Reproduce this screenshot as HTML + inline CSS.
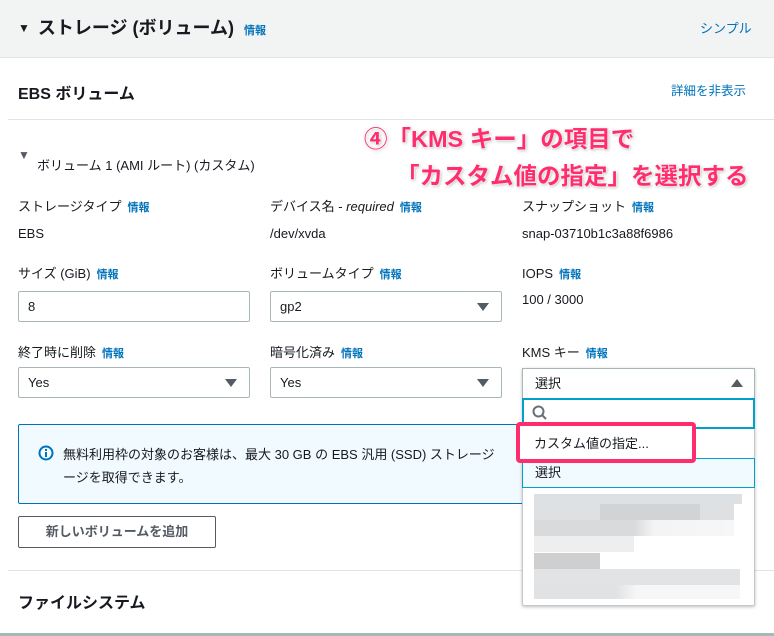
<!DOCTYPE html>
<html><head><meta charset="utf-8"><style>
*{margin:0;padding:0;box-sizing:border-box}
body{width:774px;height:636px;position:relative;overflow:hidden;background:#fff;font-family:"Liberation Sans","Noto Sans CJK JP",sans-serif;color:#16191f;font-size:14px}
.a{position:absolute;white-space:nowrap}
.i{color:#0073bb;font-size:11px;font-weight:bold;margin-left:6px}
.lbl{font-size:13px;line-height:16px}
.val{font-size:13px}
.box{position:absolute;border:1px solid #aab7b8;border-radius:2px;background:#fff;height:31px;font-size:13px;line-height:29px;padding-left:9px}
.tri{position:absolute;right:12px;top:11px;width:0;height:0;border-left:6px solid transparent;border-right:6px solid transparent;border-top:8px solid #545b64}
.ann{position:absolute;white-space:nowrap;color:#ff2d6e;font-weight:bold;font-size:23.5px;text-shadow:0 0 2px #fff,0 0 2px #fff,1px 1px 3px rgba(0,0,0,.35)}
</style></head><body>
<div class="a" style="left:0;top:0;width:774px;height:58px;background:#f2f3f3;border-bottom:1px solid #e1e4e4"></div>
<div class="a" style="left:18px;top:16px;font-size:18px;font-weight:bold;line-height:24px"><span style="font-size:12px;margin-right:8px;position:relative;top:-2px">▼</span>ストレージ (ボリューム)<span class="i" style="margin-left:10px">情報</span></div>
<div class="a" style="left:700px;top:18px;color:#0073bb;font-size:13px">シンプル</div>
<div class="a" style="left:18px;top:80px;font-size:16px;font-weight:bold">EBS ボリューム</div>
<div class="a" style="left:671px;top:80px;color:#0073bb;font-size:12.5px">詳細を非表示</div>
<div class="a" style="left:8px;top:119px;width:766px;height:1px;background:#e1e4e4"></div>
<div class="a" style="left:18px;top:148px;font-size:12px;color:#545b64">▼</div>
<div class="a" style="left:37px;top:155px;font-size:13px">ボリューム 1 (AMI ルート) (カスタム)</div>

<div class="a lbl" style="left:18px;top:199px">ストレージタイプ<span class="i">情報</span></div>
<div class="a lbl" style="left:270px;top:199px">デバイス名 - <i>required</i><span class="i">情報</span></div>
<div class="a lbl" style="left:522px;top:199px">スナップショット<span class="i">情報</span></div>
<div class="a val" style="left:18px;top:226px">EBS</div>
<div class="a val" style="left:270px;top:226px">/dev/xvda</div>
<div class="a val" style="left:522px;top:226px">snap-03710b1c3a88f6986</div>

<div class="a lbl" style="left:18px;top:266px">サイズ (GiB)<span class="i">情報</span></div>
<div class="a lbl" style="left:270px;top:266px">ボリュームタイプ<span class="i">情報</span></div>
<div class="a lbl" style="left:522px;top:266px">IOPS<span class="i">情報</span></div>
<div class="box" style="left:18px;top:291px;width:232px">8</div>
<div class="box" style="left:270px;top:291px;width:232px">gp2<div class="tri"></div></div>
<div class="a val" style="left:522px;top:292px">100 / 3000</div>

<div class="a lbl" style="left:18px;top:345px">終了時に削除<span class="i">情報</span></div>
<div class="a lbl" style="left:270px;top:345px">暗号化済み<span class="i">情報</span></div>
<div class="a lbl" style="left:522px;top:345px">KMS キー<span class="i">情報</span></div>
<div class="box" style="left:18px;top:367px;width:232px">Yes<div class="tri"></div></div>
<div class="box" style="left:270px;top:367px;width:232px">Yes<div class="tri"></div></div>

<div class="a" style="left:18px;top:424px;width:737px;height:80px;background:#f1faff;border:1px solid #0073bb;border-radius:2px"></div>
<svg class="a" style="left:38px;top:445px" width="16" height="16" viewBox="0 0 16 16"><circle cx="8" cy="8" r="6.5" fill="none" stroke="#0073bb" stroke-width="2"/><rect x="7" y="7" width="2" height="5" fill="#0073bb"/><rect x="7" y="4" width="2" height="2" fill="#0073bb"/></svg>
<div class="a" style="left:63px;top:443px;font-size:13px;line-height:23px">無料利用枠の対象のお客様は、最大 30 GB の EBS 汎用 (SSD) ストレージ<br>ージを取得できます。</div>

<div class="a" style="left:18px;top:516px;width:198px;height:32px;border:1px solid #545b64;border-radius:2px;font-weight:bold;color:#545b64;font-size:13px;text-align:center;line-height:30px">新しいボリュームを追加</div>
<div class="a" style="left:8px;top:570px;width:766px;height:1px;background:#e1e4e4"></div>
<div class="a" style="left:18px;top:589px;font-size:16px;font-weight:bold">ファイルシステム</div>
<div class="a" style="left:0;top:633px;width:774px;height:3px;background:#aab7b8"></div>

<div class="a" style="left:522px;top:368px;width:233px;height:238px;background:#fff;border:1px solid #c4c8c8;border-radius:2px;box-shadow:0 1px 3px rgba(0,0,0,.25)"></div>
<div class="a" style="left:522px;top:368px;width:233px;height:30px;font-size:13px;line-height:30px;padding-left:12px;border:1px solid #aab7b8;border-bottom:none">選択<div style="position:absolute;right:11px;top:10px;width:0;height:0;border-left:6px solid transparent;border-right:6px solid transparent;border-bottom:8px solid #545b64"></div></div>
<div class="a" style="left:522px;top:398px;width:233px;height:31px;border:2px solid #00a1c9"></div>
<svg class="a" style="left:531px;top:404px" width="18" height="18" viewBox="0 0 18 18"><circle cx="7.5" cy="7.5" r="5" fill="none" stroke="#687078" stroke-width="2"/><line x1="11" y1="11" x2="15" y2="15" stroke="#687078" stroke-width="2"/></svg>
<div class="a" style="left:522px;top:458px;width:233px;height:30px;background:#f1faff;border:1px solid #00a1c9;font-size:13px;line-height:28px;padding-left:12px">選択</div>
<div class="a" style="left:534px;top:494px;width:208px;height:10px;background:#dde1e4"></div>
<div class="a" style="left:534px;top:504px;width:200px;height:16px;background:#dfe0e1"></div>
<div class="a" style="left:600px;top:504px;width:100px;height:16px;background:#d2d3d4"></div>
<div class="a" style="left:534px;top:520px;width:200px;height:16px;background:linear-gradient(90deg,#d9dadb 0,#d9dadb 50%,#f4f4f4 60%,#f7f7f7)"></div>
<div class="a" style="left:534px;top:536px;width:100px;height:16px;background:#eeeeee"></div>
<div class="a" style="left:534px;top:553px;width:66px;height:16px;background:#cfcfcf"></div>
<div class="a" style="left:534px;top:569px;width:206px;height:16px;background:#e2e3e5"></div>
<div class="a" style="left:534px;top:585px;width:206px;height:14px;background:linear-gradient(90deg,#e1e2e3 0,#e1e2e3 40%,#f7f7f7 50%)"></div>

<div class="a" style="left:516px;top:422px;width:180px;height:41px;border:4px solid #ff2d6e;border-radius:4px;background:#fff"></div>
<div class="a" style="left:534px;top:433px;font-size:13px">カスタム値の指定...</div>

<div class="ann" style="left:364px;top:120px">④「KMS キー」の項目で</div>
<div class="ann" style="left:396px;top:157px">「カスタム値の指定」を選択する</div>
</body></html>
